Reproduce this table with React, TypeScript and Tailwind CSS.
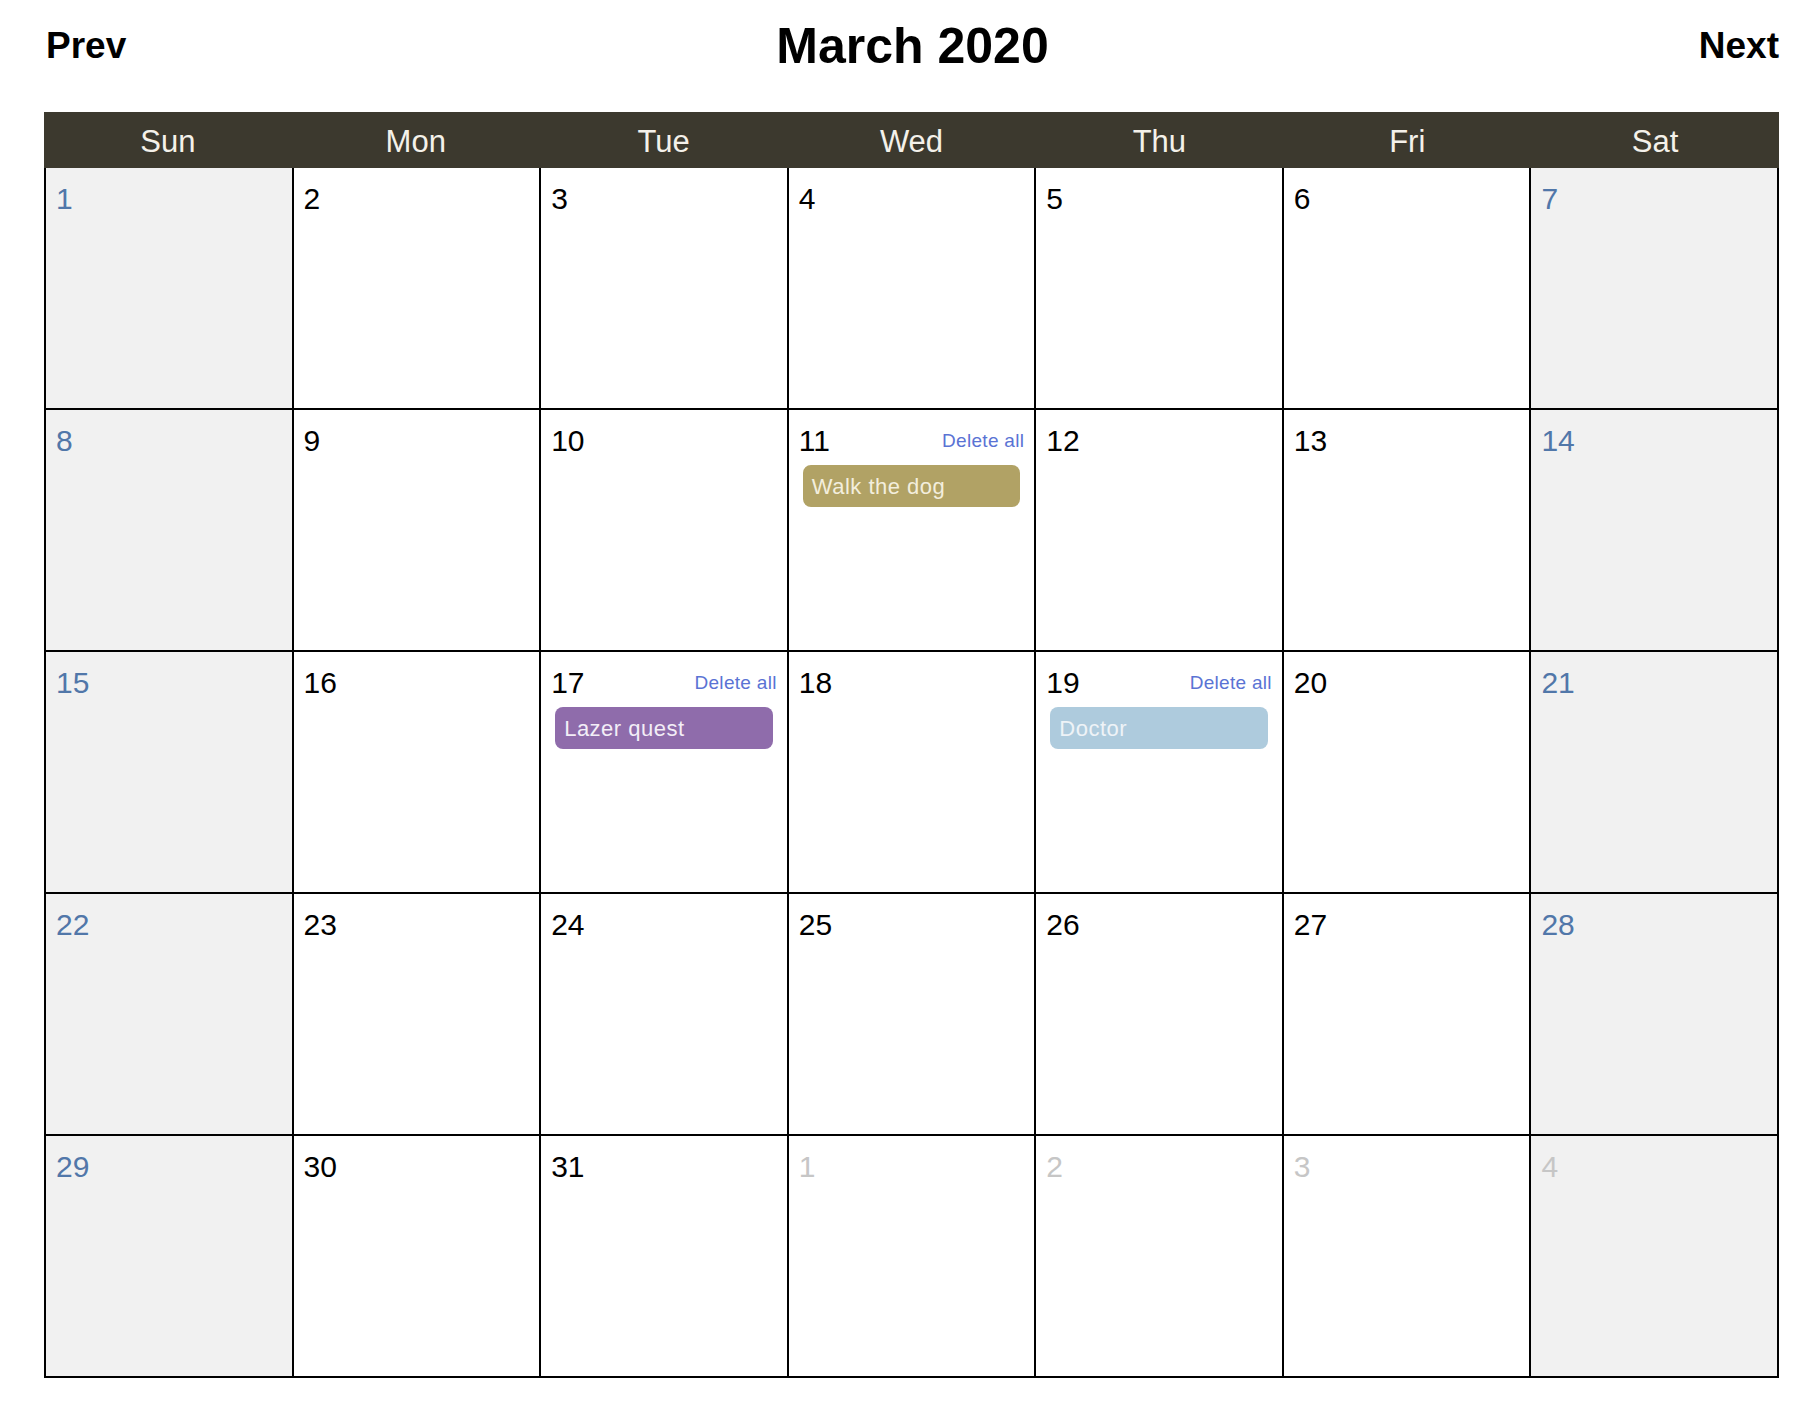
const days = ["Sun", "Mon", "Tue", "Wed", "Thu", "Fri", "Sat"]

const events: Record<number, { title: string; className: string }[]> = {
  11: [{ title: "Walk the dog", className: "bg-[#b1a265] text-[#f3eedd]" }],
  17: [{ title: "Lazer quest", className: "bg-[#8f6cab] text-[#f3eef7]" }],
  19: [{ title: "Doctor", className: "bg-[#aecbdd] text-[#eef3f7]" }],
}

function DayCell({ day, inMonth, weekend }: { day: number; inMonth: boolean; weekend: boolean }) {
  const list = inMonth ? events[day] ?? [] : []
  const numberColor = !inMonth
    ? "text-[#c6c6c6]"
    : weekend
      ? "text-[#5177a9]"
      : "text-black"

  return (
    <div
      className={`h-[242px] border-r-2 border-b-2 border-black px-[10px] pt-[14px] ${
        weekend ? "bg-[#f1f1f1]" : "bg-white"
      }`}
    >
      <div className="flex items-center justify-between">
        <span className={`text-[30px] leading-[34px] ${numberColor}`}>{day}</span>
        {list.length > 0 && (
          <button className="text-[19px] leading-[24px] tracking-[0.3px] text-[#5a73d4]">Delete all</button>
        )}
      </div>
      {list.map((ev) => (
        <div
          key={ev.title}
          className={`mx-[4px] mt-[7px] flex h-[42px] items-center rounded-lg pl-[9px] text-[22px] tracking-[0.5px] ${ev.className}`}
        >
          {ev.title}
        </div>
      ))}
    </div>
  )
}

export default function App() {
  // March 2020 starts on a Sunday
  const cells: { day: number; inMonth: boolean }[] = []
  for (let d = 1; d <= 31; d++) cells.push({ day: d, inMonth: true })
  for (let d = 1; d <= 4; d++) cells.push({ day: d, inMonth: false })

  return (
    <div className="min-h-screen bg-white" style={{ fontFamily: '"Liberation Sans", Arial, sans-serif' }}>
      <div className="ml-[44px] w-[1735px]">
        {/* header */}
        <div className="flex h-[91px] items-center justify-between">
          <button className="pl-[2px] text-[37px] font-bold leading-none text-black">Prev</button>
          <h1 className="text-[50px] font-bold leading-none text-black">March 2020</h1>
          <button className="text-[37px] font-bold leading-none text-black">Next</button>
        </div>

        {/* weekdays */}
        <div className="mt-[21px] grid h-[56px] grid-cols-7 bg-[#3c392e]">
          {days.map((d) => (
            <div key={d} className="flex items-center justify-center pt-[4px] text-[31px] text-[#f4f1ea]">
              {d}
            </div>
          ))}
        </div>

        {/* month grid */}
        <div className="grid grid-cols-7 border-l-2 border-black">
          {cells.map((c, i) => (
            <DayCell
              key={i}
              day={c.day}
              inMonth={c.inMonth}
              weekend={i % 7 === 0 || i % 7 === 6}
            />
          ))}
        </div>
      </div>
    </div>
  )
}
